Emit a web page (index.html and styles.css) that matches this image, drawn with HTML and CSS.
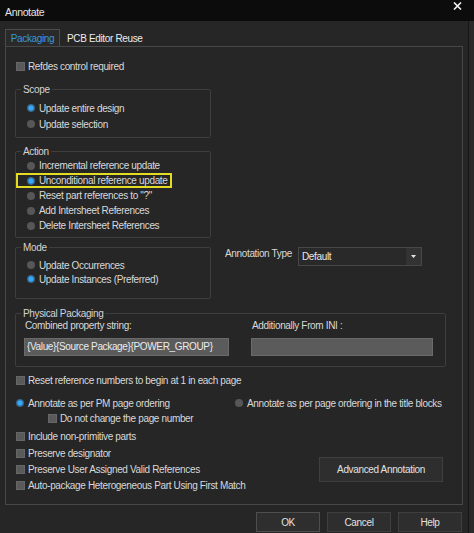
FILE: index.html
```html
<!DOCTYPE html>
<html lang="en">
<head>
  <meta charset="UTF-8" />
  <title>Annotate</title>
  <link rel="stylesheet" href="styles.css">
</head>
<body>
  <div class="dialog">

    <!-- Title bar -->
    <div class="titlebar">
      <span class="title">Annotate</span>
      <svg class="close" width="9" height="8" viewBox="0 0 9 8">
        <path d="M1 0.5 L8 7.5 M8 0.5 L1 7.5" stroke="#f2f2f2" stroke-width="1.6" fill="none" />
      </svg>
    </div>

    <div class="content">
      <div class="tabs">
        <div class="tab active">Packaging</div>
        <div class="tab">PCB Editor Reuse</div>
      </div>

      <div class="panel">
        <div class="check first"><span class="box"></span>Refdes control required</div>

        <div class="upper">
          <fieldset class="group scope">
            <legend>Scope</legend>
            <div class="radio on"><span class="dot"></span>Update entire design</div>
            <div class="radio"><span class="dot"></span>Update selection</div>
          </fieldset>

          <fieldset class="group action">
            <legend>Action</legend>
            <div class="radio"><span class="dot"></span>Incremental reference update</div>
            <div class="radio on mark"><span class="dot"></span>Unconditional reference update</div>
            <div class="radio"><span class="dot"></span>Reset part references to "?"</div>
            <div class="radio"><span class="dot"></span>Add Intersheet References</div>
            <div class="radio"><span class="dot"></span>Delete Intersheet References</div>
          </fieldset>

          <fieldset class="group mode">
            <legend>Mode</legend>
            <div class="radio"><span class="dot"></span>Update Occurrences</div>
            <div class="radio on"><span class="dot"></span>Update Instances (Preferred)</div>
          </fieldset>

          <div class="annotation">
            <span class="annotation-label">Annotation Type</span>
            <div class="select">
              <span class="select-value">Default</span>
              <span class="select-arrow">
                <svg width="5" height="3" viewBox="0 0 5 3"><path d="M0 0 H5 L2.5 3 Z" fill="#e6e6e6" /></svg>
              </span>
            </div>
          </div>
        </div>

        <fieldset class="group physical">
          <legend>Physical Packaging</legend>
          <div class="fields">
            <label>Combined property string:</label>
            <label>Additionally From INI :</label>
            <div class="field">{Value}{Source Package}{POWER_GROUP}</div>
            <div class="field"></div>
          </div>
        </fieldset>

        <div class="check reset"><span class="box"></span>Reset reference numbers to begin at 1 in each page</div>

        <div class="ordering">
          <div class="radio on"><span class="dot"></span>Annotate as per PM page ordering</div>
          <div class="radio"><span class="dot"></span>Annotate as per page ordering in the title blocks</div>
        </div>
        <div class="check sub"><span class="box"></span>Do not change the page number</div>
        <div class="check include"><span class="box"></span>Include non-primitive parts</div>

        <div class="lower">
          <div class="list">
            <div class="check"><span class="box"></span>Preserve designator</div>
            <div class="check"><span class="box"></span>Preserve User Assigned Valid References</div>
            <div class="check"><span class="box"></span>Auto-package Heterogeneous Part Using First Match</div>
          </div>
          <button class="btn btn-adv">Advanced Annotation</button>
        </div>
      </div>

      <div class="footer">
        <button class="btn default">OK</button>
        <button class="btn">Cancel</button>
        <button class="btn">Help</button>
      </div>
    </div>
  </div>
</body>
</html>
```

FILE: styles.css
```css
* {
  box-sizing: border-box;
}

body {
  margin: 0;
  background: #2a2a2a;
  font-family: "Liberation Sans", Arial, sans-serif;
  font-size: 10px;
  letter-spacing: -0.35px;
  color: #d9d9d9;
}

.dialog {
  width: 474px;
  height: 533px;
  overflow: hidden;
}

/* Title bar */
.titlebar {
  height: 21px;
  background: #0c0c0c;
  display: flex;
  justify-content: space-between;
  align-items: flex-start;
  padding: 0 12px 0 5px;
}

.title {
  margin-top: 6px;
  line-height: 12px;
  font-size: 10.5px;
  color: #e4e4e4;
}

.close {
  margin-top: 2px;
}

.content {
  width: 469px;
  height: 512px;
  background: #262626;
  border-right: 1px solid #161616;
  padding: 8px 0 0 5px;
}

/* Tabs */
.tabs {
  display: flex;
  height: 17px;
}

.tab {
  line-height: 14px;
  padding-top: 3px;
  color: #ededed;
}

.tab.active {
  width: 55px;
  text-align: center;
  padding-top: 2px;
  color: #3c96da;
  background: #2a2a2a;
  border: 1px solid #4c4c4c;
  border-bottom: none;
}

.tab + .tab {
  margin-left: 7px;
}

.panel {
  width: 458px;
  border: 1px solid #474747;
  padding: 0 0 11px 9px;
}

/* Check boxes and radio buttons */
.check,
.radio {
  display: flex;
  align-items: center;
  height: 14px;
  white-space: nowrap;
}

.box {
  flex: none;
  width: 9px;
  height: 9px;
  margin: 0 3px 0 1px;
  background: #5a5a5a;
  border: 1px solid #666;
}

.dot {
  flex: none;
  width: 8px;
  height: 8px;
  margin-right: 4px;
  border-radius: 50%;
  background: #575757;
}

.radio.on .dot {
  background: radial-gradient(circle, #3aa8f4 0 2.2px, #2a7ab8 2.8px, #40596c 4px);
}

.check.first {
  margin-top: 12px;
}

/* Group boxes */
.group {
  margin: 0;
  padding: 0;
  min-width: 0;
  border: 1px solid #3e3e3e;
  border-radius: 2px;
}

.group legend {
  margin-left: 5px;
  padding: 0 2px;
  line-height: 13px;
  color: #d4d4d4;
}

.group .radio {
  padding-left: 11px;
}

.upper {
  display: grid;
  grid-template-columns: 196px 1fr;
  column-gap: 14px;
  margin-top: 10px;
}

.upper .group {
  grid-column: 1;
}

.scope {
  padding: 4px 0 5px;
}

.scope .radio {
  height: 16px;
}

.action {
  margin-top: 7px !important;
  padding-bottom: 4px !important;
}

.action .radio {
  height: 15px;
}

.radio.mark {
  width: fit-content;
  padding-right: 4px;
  box-shadow: inset 0 0 0 2px #e3dc22;
}

.mode {
  grid-row: 3;
  margin-top: 3px !important;
  padding: 4px 0 12px !important;
}

.annotation {
  grid-column: 2;
  grid-row: 3;
  margin-top: 9px;
  display: flex;
  align-items: flex-start;
}

.annotation-label {
  width: 73px;
  margin-top: 1px;
  line-height: 12px;
}

.select {
  display: flex;
  width: 124px;
  height: 19px;
  background: #292929;
  border: 1px solid #474747;
}

.select-value {
  flex: 1;
  padding: 1px 0 0 3px;
  line-height: 16px;
  color: #e8e8e8;
}

.select-arrow {
  width: 15px;
  display: flex;
  align-items: center;
  justify-content: center;
  background: #333;
}

/* Physical packaging */
.physical {
  width: 431px;
  margin-top: 8px;
  padding-bottom: 10px;
}

.fields {
  display: grid;
  grid-template-columns: 205px 182px;
  column-gap: 22px;
  row-gap: 6px;
  padding-left: 8px;
}

.fields label {
  line-height: 12px;
  padding-left: 1px;
}

.field {
  height: 18px;
  padding-left: 2px;
  line-height: 16px;
  background: #5b5b5b;
  border: 1px solid #6a6a6a;
  color: #ececec;
  white-space: nowrap;
}

.check.reset {
  margin-top: 6px;
}

.ordering {
  display: grid;
  grid-template-columns: 219px 1fr;
  margin-top: 9px;
  padding-left: 1px;
}

.check.sub {
  margin-top: 1px;
  padding-left: 32px;
}

.check.include {
  margin-top: 4px;
}

.lower {
  display: flex;
  align-items: center;
  margin-top: 2px;
}

.lower .check {
  height: 16px;
}

/* Buttons */
.btn {
  font: inherit;
  letter-spacing: inherit;
  color: #e2e2e2;
  background: #2e2e2e;
  border: 1px solid #3f3f3f;
  padding: 0;
}

.btn-adv {
  width: 124px;
  height: 25px;
  margin: 0 19px 0 auto;
}

.footer {
  display: flex;
  justify-content: flex-end;
  gap: 7px;
  margin-top: 7px;
  padding-right: 6px;
}

.footer .btn {
  width: 64px;
  height: 20px;
}

.btn.default {
  border-color: #4e4e4e;
}
```
